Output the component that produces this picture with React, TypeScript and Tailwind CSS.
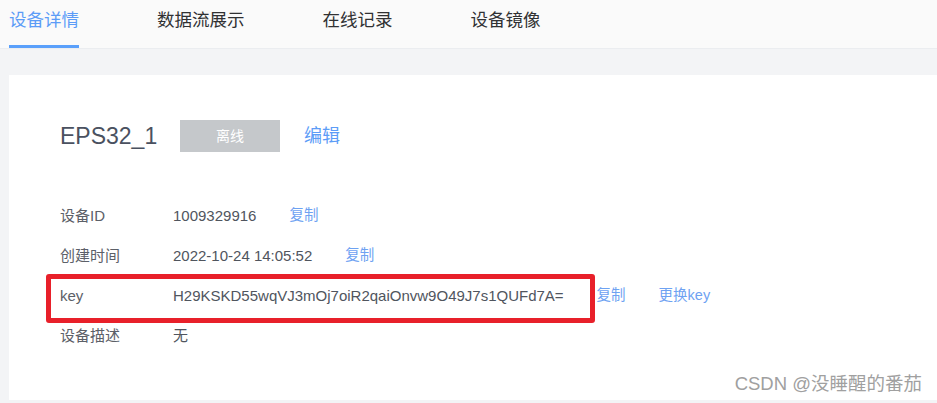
import React from "react";

const cjk = '"Liberation Sans", "Noto Sans CJK SC", sans-serif';

function Row({ label, value, links }: { label: string; value: string; links?: string[] }) {
  return (
    <div className="flex h-[40px] items-center text-[15px]">
      <div className="w-[113px] text-[#5c6068]">{label}</div>
      <div className="flex items-center gap-[33px]">
        <span className="text-[#50555e]">{value}</span>
        {links?.map((l) => (
          <span key={l} className="text-[14.5px] text-[#6ea2f2]">
            {l}
          </span>
        ))}
      </div>
    </div>
  );
}

export default function App() {
  return (
    <div className="relative flex h-[403px] w-full flex-col overflow-hidden bg-[#f3f4f6]" style={{ fontFamily: cjk }}>
      <div className="flex h-[49px] shrink-0 items-stretch gap-[78px] border-b border-[#ebedf0] bg-[#fafafa] pl-[9px]">
        <div className="relative flex items-center pb-[8px] text-[17.5px] text-[#5c9cf7]">
          设备详情
          <div className="absolute bottom-0 left-0 right-0 h-[3px] bg-[#5aa0fb]" />
        </div>
        <div className="flex items-center pb-[8px] text-[17.5px] text-[#303133]">数据流展示</div>
        <div className="flex items-center pb-[8px] text-[17.5px] text-[#303133]">在线记录</div>
        <div className="flex items-center pb-[8px] text-[17.5px] text-[#303133]">设备镜像</div>
      </div>
      <div className="flex-1 pl-[9px] pt-[26px] pb-[3px]">
        <div className="relative h-full bg-white pl-[51px] pt-[45px]">
          <div className="flex h-[32px] items-center">
            <span className="w-[120px] text-[23px] text-[#4a5160]">EPS32_1</span>
            <span className="flex h-[32px] w-[100px] items-center justify-center bg-[#c5c8cb] text-[14px] text-white">
              离线
            </span>
            <span className="ml-[24px] text-[18px] text-[#5c9cf7]">编辑</span>
          </div>
          <div className="mt-[44px]">
            <Row label="设备ID" value="1009329916" links={["复制"]} />
            <Row label="创建时间" value="2022-10-24 14:05:52" links={["复制"]} />
            <Row label="key" value="H29KSKD55wqVJ3mOj7oiR2qaiOnvw9O49J7s1QUFd7A=" links={["复制", "更换key"]} />
            <Row label="设备描述" value="无" />
          </div>
          <div className="absolute left-[37px] top-[199px] h-[49px] w-[549px] rounded-[3px] border-[5px] border-[#e8202a]" />
          <div className="absolute bottom-[2px] right-[15px] text-[18.5px] text-[#a0a0a0] [text-shadow:0_0_2px_#fff]">
            CSDN @没睡醒的番茄
          </div>
        </div>
      </div>
    </div>
  );
}
